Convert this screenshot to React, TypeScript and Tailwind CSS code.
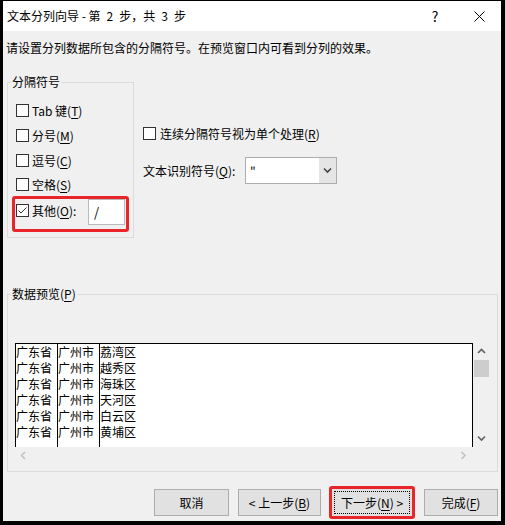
import React from 'react';

const FONT = "font-['Noto_Sans_CJK_SC','Noto_Sans',sans-serif]";

const Key = ({ k }: { k: string }) => (
  <span className="underline underline-offset-[2px] decoration-1">{k}</span>
);

function Box({ checked }: { checked?: boolean }) {
  return (
    <span className="w-[13px] h-[13px] shrink-0 border border-[#333333] bg-white flex items-center justify-center">
      {checked && (
        <svg width="11" height="11" viewBox="0 0 11 11">
          <polyline points="1.5,5.5 4,8 9.5,2.5" fill="none" stroke="#333" strokeWidth="1" />
        </svg>
      )}
    </span>
  );
}

function Chevron({ dir, color }: { dir: 'up' | 'down' | 'left' | 'right'; color: string }) {
  const pts = {
    up: '1,5 4.5,1.5 8,5',
    down: '1,1.5 4.5,5 8,1.5',
    left: '5,1 1.5,4.5 5,8',
    right: '1.5,1 5,4.5 1.5,8',
  }[dir];
  const w = dir === 'up' || dir === 'down' ? 9 : 7;
  const h = dir === 'up' || dir === 'down' ? 7 : 9;
  return (
    <svg width={w} height={h} viewBox={`0 0 ${w} ${h}`}>
      <polyline points={pts} fill="none" stroke={color} strokeWidth="1.6" />
    </svg>
  );
}

const ROWS = ['荔湾区', '越秀区', '海珠区', '天河区', '白云区', '黄埔区'];

function CheckRow({ label, k, mt }: { label: string; k: string; mt: string }) {
  return (
    <div className={`flex items-center gap-[3px] h-[13px] ${mt}`}>
      <Box />
      <span className="leading-[16px]">
        {label}(<Key k={k} />)
      </span>
    </div>
  );
}

export default function App() {
  return (
    <div className={`w-[505px] h-[525px] bg-black pt-px pl-[3px] pr-[4px] pb-[4px] text-[12px] text-black ${FONT}`}>
      <div className="w-full h-full bg-[#f0f0f0] flex flex-col">
        {/* title bar */}
        <div className="h-[30px] bg-white flex items-center pl-[4px] shrink-0">
          <span className="leading-[16px] whitespace-pre">文本分列向导 - 第{'\u2002'}2{'\u2002'}步，共{'\u2002'}3{'\u2002'}步</span>
          <div className="ml-auto flex h-full">
            <div className="w-[44px] flex items-center justify-center text-[14px]">?</div>
            <div className="w-[44px] flex items-center justify-center">
              <svg width="11" height="11" viewBox="0 0 11 11">
                <path d="M0.5 0.5 L10.5 10.5 M10.5 0.5 L0.5 10.5" stroke="#000" strokeWidth="1" />
              </svg>
            </div>
          </div>
        </div>

        <div className="pt-[9px] pl-[3px] leading-[16px]">
          请设置分列数据所包含的分隔符号。在预览窗口内可看到分列的效果。
        </div>

        {/* upper area */}
        <div className="flex mt-[26px] pl-[4px]">
          <div className="relative w-[127px] h-[156px] border border-[#dcdcdc]">
            <span className="absolute left-[3px] top-[-9px] px-px bg-[#f0f0f0] leading-[16px]">分隔符号</span>
            <div className="flex flex-col pl-[8px] pt-[21px]">
              <div className="flex items-center gap-[3px] h-[13px]">
                <Box />
                <span className="leading-[16px]">
                  Tab 键(<Key k="T" />)
                </span>
              </div>
              <CheckRow label="分号" k="M" mt="mt-[12px]" />
              <CheckRow label="逗号" k="C" mt="mt-[12px]" />
              <CheckRow label="空格" k="S" mt="mt-[11px]" />
              <div className="ml-[-4px] mt-[5px] w-[117px] h-[36px] border-[3px] border-[#e8262a] rounded-[3px] flex items-start pl-px">
                <div className="flex items-center gap-[3px] h-[13px] mt-[5px]">
                  <Box checked />
                  <span className="leading-[16px]">
                    其他(<Key k="O" />):
                  </span>
                </div>
                <div className="ml-auto mr-px w-[37px] h-[26px] bg-white border border-[#b9b9b9] flex items-center pl-[5px] text-[13px]">
                  /
                </div>
              </div>
            </div>
          </div>

          <div className="flex flex-col ml-[9px]">
            <div className="flex items-center gap-[4px] h-[13px] mt-[45px]">
              <Box />
              <span className="leading-[16px]">
                连续分隔符号视为单个处理(<Key k="R" />)
              </span>
            </div>
            <div className="flex items-center h-[27px] mt-[17px]">
              <span className="w-[102px] leading-[16px]">
                文本识别符号(<Key k="Q" />):
              </span>
              <div className="w-[92px] h-[27px] border border-[#adadad] bg-white flex">
                <div className="flex-1 pl-[4px] flex items-center">"</div>
                <div className="w-[17px] bg-[#e5e5e5] flex items-center justify-center">
                  <Chevron dir="down" color="#444" />
                </div>
              </div>
            </div>
          </div>
        </div>

        {/* data preview */}
        <div className="relative ml-[4px] mt-[56px] w-[491px] h-[178px] border border-[#dcdcdc]">
          <span className="absolute left-[3px] top-[-9px] px-px bg-[#f0f0f0] leading-[16px]">
            数据预览(<Key k="P" />)
          </span>
          <div className="mt-[48px] ml-[7px] w-[475px] flex flex-col">
            <div className="flex h-[104px]">
              <div className="w-[458px] h-[104px] border-l border-t border-r border-black bg-white flex leading-[16px]">
                <div className="w-[42px] border-r border-black">
                  {ROWS.map((_, i) => (
                    <div key={i} className="h-[16px] whitespace-nowrap">广东省</div>
                  ))}
                </div>
                <div className="w-[42px] border-r border-black">
                  {ROWS.map((_, i) => (
                    <div key={i} className="h-[16px] whitespace-nowrap">广州市</div>
                  ))}
                </div>
                <div className="flex-1">
                  {ROWS.map((r) => (
                    <div key={r} className="h-[16px] whitespace-nowrap">{r}</div>
                  ))}
                </div>
              </div>
              <div className="w-[17px] flex flex-col">
                <div className="h-[17px] flex items-center justify-center">
                  <Chevron dir="up" color="#606060" />
                </div>
                <div className="h-[17px] w-[15px] mx-auto bg-[#cdcdcd]" />
                <div className="flex-1" />
                <div className="h-[17px] flex items-center justify-center">
                  <Chevron dir="down" color="#606060" />
                </div>
              </div>
            </div>
            <div className="w-[458px] h-[16px] flex items-center justify-between pl-[5px] pr-[6px]">
              <Chevron dir="left" color="#c2c2c2" />
              <Chevron dir="right" color="#c2c2c2" />
            </div>
          </div>
        </div>

        {/* buttons */}
        <div className="flex justify-end items-center h-[27px] mt-[17px] pr-[3px]">
          <div className="w-[75px] h-[27px] bg-[#e1e1e1] border border-[#adadad] flex items-center justify-center">取消</div>
          <div className="ml-[9px] w-[83px] h-[27px] bg-[#e1e1e1] border border-[#adadad] flex items-center justify-center">
            &lt; 上一步(<Key k="B" />)
          </div>
          <div className="ml-[8px] w-[86px] h-[33px] border-[3px] border-[#e8262a] rounded-[3px] bg-[#e1e1e1] flex">
            <span className="flex-1 m-[2px] border border-dotted border-black flex items-center justify-center">
              下一步(<Key k="N" />) &gt;
            </span>
          </div>
          <div className="ml-[9px] w-[74px] h-[27px] bg-[#e1e1e1] border border-[#adadad] flex items-center justify-center">
            完成(<Key k="F" />)
          </div>
        </div>
      </div>
    </div>
  );
}
